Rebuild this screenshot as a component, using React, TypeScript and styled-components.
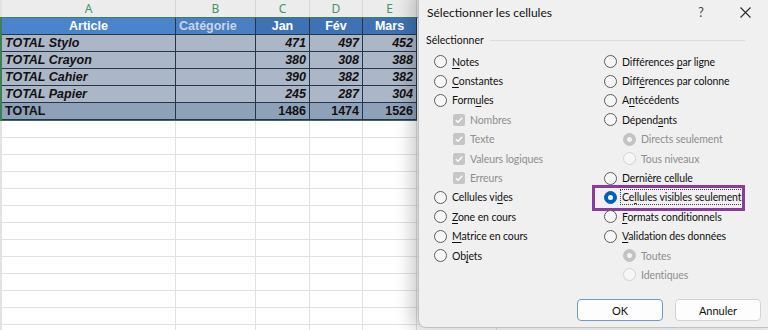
import React from 'react'
import styled, { createGlobalStyle } from 'styled-components'

const GlobalStyle = createGlobalStyle`
  html, body {
    margin: 0;
    padding: 0;
    background: #ffffff;
  }
`

const UI_FONT = `Lato, 'Noto Sans', 'DejaVu Sans', sans-serif`
const HEAD_FONT = `'Noto Sans', 'DejaVu Sans', sans-serif`
const SHEET_FONT = `'Liberation Sans', Arial, sans-serif`

const COLS = [174, 80, 54, 53, 54]
const LETTERS = ['A', 'B', 'C', 'D', 'E']

const DATA = [
  { label: 'TOTAL Stylo', values: [471, 497, 452] },
  { label: 'TOTAL Crayon', values: [380, 308, 388] },
  { label: 'TOTAL Cahier', values: [390, 382, 382] },
  { label: 'TOTAL Papier', values: [245, 287, 304] },
]
const TOTAL = { label: 'TOTAL', values: [1486, 1474, 1526] }

type RadioState = 'off' | 'on' | 'disabledOn' | 'disabledOff'

interface Option {
  label: string
  kind: 'radio' | 'check'
  state?: RadioState
  sub?: boolean
  disabled?: boolean
  focused?: boolean
}

const LEFT: Option[] = [
  { label: '&Notes', kind: 'radio', state: 'off' },
  { label: '&Constantes', kind: 'radio', state: 'off' },
  { label: 'Form&ules', kind: 'radio', state: 'off' },
  { label: 'Nombres', kind: 'check', sub: true, disabled: true },
  { label: 'Texte', kind: 'check', sub: true, disabled: true },
  { label: 'Valeurs logiques', kind: 'check', sub: true, disabled: true },
  { label: 'Erreurs', kind: 'check', sub: true, disabled: true },
  { label: 'Cellules vi&des', kind: 'radio', state: 'off' },
  { label: '&Zone en cours', kind: 'radio', state: 'off' },
  { label: '&Matrice en cours', kind: 'radio', state: 'off' },
  { label: 'Ob&jets', kind: 'radio', state: 'off' },
]

const RIGHT: Option[] = [
  { label: 'Différences &par ligne', kind: 'radio', state: 'off' },
  { label: 'Diff&érences par colonne', kind: 'radio', state: 'off' },
  { label: 'A&ntécédents', kind: 'radio', state: 'off' },
  { label: 'Dépend&ants', kind: 'radio', state: 'off' },
  { label: 'Directs seulement', kind: 'radio', state: 'disabledOn', sub: true, disabled: true },
  { label: 'Tous niveaux', kind: 'radio', state: 'disabledOff', sub: true, disabled: true },
  { label: 'Dernière cellule', kind: 'radio', state: 'off' },
  { label: 'Ce&llules visibles seulement', kind: 'radio', state: 'on', focused: true },
  { label: '&Formats conditionnels', kind: 'radio', state: 'off' },
  { label: '&Validation des données', kind: 'radio', state: 'off' },
  { label: 'Toutes', kind: 'radio', state: 'disabledOn', sub: true, disabled: true },
  { label: 'Identiques', kind: 'radio', state: 'disabledOff', sub: true, disabled: true },
]

// "&" marks the access key, like in a Windows resource
function Label({ text }: { text: string }) {
  const i = text.indexOf('&')
  if (i < 0) return <>{text}</>
  return (
    <>
      {text.slice(0, i)}
      <u>{text[i + 1]}</u>
      {text.slice(i + 2)}
    </>
  )
}

function App() {
  return (
    <Page>
      <GlobalStyle />

      <Sheet>
        <ColHeadRow>
          <Stub />
          {COLS.map((w, i) => (
            <ColHead key={i} $w={w}>{LETTERS[i]}</ColHead>
          ))}
          <ColHead $w={80} $plain />
        </ColHeadRow>

        <Table>
          <TCell $kind="headA" $align="center">Article</TCell>
          <TCell $kind="headB" $align="left" $faded>Catégorie</TCell>
          <TCell $kind="head" $align="center">Jan</TCell>
          <TCell $kind="head" $align="center">Fév</TCell>
          <TCell $kind="head" $align="center">Mars</TCell>

          {DATA.map((row) => (
            <React.Fragment key={row.label}>
              <TCell $kind="data" $align="left">{row.label}</TCell>
              <TCell $kind="data" $align="left" />
              {row.values.map((v, i) => (
                <TCell key={i} $kind="data" $align="right">{v}</TCell>
              ))}
            </React.Fragment>
          ))}

          <TCell $kind="total" $align="left">{TOTAL.label}</TCell>
          <TCell $kind="total" $align="left" />
          {TOTAL.values.map((v, i) => (
            <TCell key={i} $kind="total" $align="right">{v}</TCell>
          ))}
        </Table>

        {Array.from({ length: 13 }).map((_, r) => (
          <GridRow key={r}>
            <Stub />
            {COLS.map((w, i) => (
              <GridCell key={i} $w={w} />
            ))}
            <GridCell $w={80} />
          </GridRow>
        ))}
      </Sheet>

      <Dialog>
        <TitleBar>
          <Title>Sélectionner les cellules</Title>
          <TitleButton>?</TitleButton>
          <TitleButton>
            <svg width="11" height="11" viewBox="0 0 11 11">
              <path d="M0.5 0.5 L10.5 10.5 M10.5 0.5 L0.5 10.5" stroke="#2b2b2b" strokeWidth="1.1" fill="none" />
            </svg>
          </TitleButton>
        </TitleBar>

        <GroupHeader>
          <GroupLabel>Sélectionner</GroupLabel>
          <GroupLine />
        </GroupHeader>

        <Options>
          <OptionColumn $w={170}>
            {LEFT.map((o) => <OptionRow key={o.label} option={o} />)}
          </OptionColumn>
          <OptionColumn>
            {RIGHT.map((o) => <OptionRow key={o.label} option={o} />)}
          </OptionColumn>
        </Options>

        <ButtonRow>
          <Button $primary>OK</Button>
          <Button>Annuler</Button>
        </ButtonRow>
      </Dialog>
    </Page>
  )
}

function OptionRow({ option }: { option: Option }) {
  return (
    <Row $sub={!!option.sub} $highlight={!!option.focused}>
      {option.kind === 'radio' ? (
        <Radio $state={option.state || 'off'} />
      ) : (
        <Check>
          <svg width="10" height="10" viewBox="0 0 10 10">
            <path d="M1.8 5.2 L4 7.3 L8.3 2.8" stroke="#ffffff" strokeWidth="1.3" fill="none" />
          </svg>
        </Check>
      )}
      <OptionText $disabled={!!option.disabled} $focused={!!option.focused}>
        <Label text={option.label} />
      </OptionText>
    </Row>
  )
}

const Page = styled.div`
  position: relative;
  width: 768px;
  height: 330px;
  overflow: hidden;
  background: #ffffff;
`

/* ---------- spreadsheet ---------- */

const Sheet = styled.div`
  display: flex;
  flex-direction: column;
  font-family: ${SHEET_FONT};
`

const ColHeadRow = styled.div`
  display: flex;
  height: 18px;
  box-sizing: border-box;
  background: #f4f4f4;
  border-bottom: 1px solid #3f7f58;
`

const Stub = styled.div`
  width: 2px;
  flex: none;
  background: #e2e2e2;
`

const ColHead = styled.div<{ $w: number; $plain?: boolean }>`
  width: ${(p) => p.$w}px;
  flex: none;
  box-sizing: border-box;
  border-right: 1px solid #d6d6d6;
  text-align: center;
  font-family: ${HEAD_FONT};
  font-size: 12px;
  line-height: 17px;
  color: #4a9268;
  background: ${(p) => (p.$plain ? '#f4f4f4' : '#ececec')};
`

const Table = styled.div`
  display: grid;
  grid-template-columns: ${COLS.map((w) => `${w}px`).join(' ')};
  grid-auto-rows: 17px;
  width: max-content;
  border-left: 2px solid #3f7f58;
  border-bottom: 1px solid #3f6a58;
`

type CellKind = 'headA' | 'headB' | 'head' | 'data' | 'total'

const CELL_BG: Record<CellKind, string> = {
  headA: '#4a85cb',
  headB: '#4a7fc2',
  head: '#3f72b3',
  data: '#abb6c6',
  total: '#8fa1b9',
}

const TCell = styled.div<{ $kind: CellKind; $align: 'left' | 'center' | 'right'; $faded?: boolean }>`
  box-sizing: border-box;
  background: ${(p) => CELL_BG[p.$kind]};
  border-right: 1px solid #24364c;
  border-bottom: 1px solid #24364c;
  padding: 0 3px;
  text-align: ${(p) => p.$align};
  font-size: 12.5px;
  line-height: 16px;
  font-weight: bold;
  font-style: ${(p) => (p.$kind === 'data' ? 'italic' : 'normal')};
  color: ${(p) =>
    p.$faded ? '#c9d5e6' : p.$kind.startsWith('head') ? '#ffffff' : '#111111'};
  white-space: nowrap;
  overflow: hidden;
`

const GridRow = styled.div`
  display: flex;
  height: 17px;
  box-sizing: border-box;
  border-bottom: 1px solid #e1e1e1;
`

const GridCell = styled.div<{ $w: number }>`
  width: ${(p) => p.$w}px;
  flex: none;
  box-sizing: border-box;
  border-right: 1px solid #e1e1e1;
`

/* ---------- dialog ---------- */

const Dialog = styled.div`
  position: absolute;
  left: 418px;
  top: -12px;
  width: 362px;
  height: 340px;
  box-sizing: border-box;
  display: flex;
  flex-direction: column;
  background: #f0f0f0;
  border: 1px solid #c2c2c2;
  border-radius: 8px;
  box-shadow: -6px 2px 18px rgba(0, 0, 0, 0.22);
  font-family: ${UI_FONT};
  color: #111;
`

const TitleBar = styled.div`
  display: flex;
  align-items: center;
  height: 28px;
  margin-top: 9px;
  padding: 0 12px 0 8px;
`

const Title = styled.div`
  flex: 1;
  font-size: 12px;
  color: #111;
`

const TitleButton = styled.div`
  width: 44px;
  display: flex;
  align-items: center;
  justify-content: center;
  font-size: 12.5px;
  color: #444;
`

const GroupHeader = styled.div`
  display: flex;
  align-items: center;
  gap: 6px;
  height: 14px;
  margin-top: 7px;
  padding: 0 34px 0 7px;
`

const GroupLabel = styled.div`
  font-size: 10.5px;
`

const GroupLine = styled.div`
  flex: 1;
  height: 1px;
  background: #dcdcdc;
`

const Options = styled.div`
  display: flex;
  margin-top: 5px;
  padding-left: 15px;
`

const OptionColumn = styled.div<{ $w?: number }>`
  display: flex;
  flex-direction: column;
  width: ${(p) => (p.$w ? `${p.$w}px` : 'auto')};
`

const Row = styled.div<{ $sub: boolean; $highlight: boolean }>`
  position: relative;
  display: flex;
  align-items: center;
  gap: 5px;
  height: 19.4px;
  padding-left: ${(p) => (p.$sub ? '19px' : '0')};

  ${(p) =>
    p.$highlight &&
    `
    &::after {
      content: '';
      position: absolute;
      left: -12px;
      top: -3px;
      bottom: -4px;
      width: 153px;
      box-sizing: border-box;
      border: 3px solid #8b3b9e;
    }
  `}
`

const RADIO_STYLE: Record<RadioState, { border: string; bg: string; dot: string }> = {
  off: { border: '#5c5c5c', bg: '#f7f7f7', dot: 'transparent' },
  on: { border: '#005fb8', bg: '#005fb8', dot: '#ffffff' },
  disabledOn: { border: '#c3c3c3', bg: '#c3c3c3', dot: '#f3f3f3' },
  disabledOff: { border: '#d2d2d2', bg: '#f6f6f6', dot: 'transparent' },
}

const Radio = styled.span<{ $state: RadioState }>`
  box-sizing: border-box;
  flex: none;
  width: 13px;
  height: 13px;
  border-radius: 50%;
  border: 1px solid ${(p) => RADIO_STYLE[p.$state].border};
  background: ${(p) => RADIO_STYLE[p.$state].bg};
  display: flex;
  align-items: center;
  justify-content: center;

  &::after {
    content: '';
    width: 5px;
    height: 5px;
    border-radius: 50%;
    background: ${(p) => RADIO_STYLE[p.$state].dot};
  }
`

const Check = styled.span`
  flex: none;
  width: 12px;
  height: 12px;
  border-radius: 2px;
  background: #c6c6c6;
  display: flex;
  align-items: center;
  justify-content: center;
`

const OptionText = styled.span<{ $disabled: boolean; $focused: boolean }>`
  font-size: 10.5px;
  letter-spacing: -0.1px;
  white-space: nowrap;
  color: ${(p) => (p.$disabled ? '#8e8e8e' : '#111')};
  outline: ${(p) => (p.$focused ? '1px dotted #444' : 'none')};
  outline-offset: 1px;

  u {
    text-underline-offset: 1.5px;
  }
`

const ButtonRow = styled.div`
  display: flex;
  justify-content: flex-end;
  gap: 12px;
  margin-top: auto;
  padding: 0 18px 6px 0;
`

const Button = styled.div<{ $primary?: boolean }>`
  width: 86px;
  height: 22px;
  box-sizing: border-box;
  display: flex;
  align-items: center;
  justify-content: center;
  font-size: 11px;
  background: #fdfdfd;
  border: 1px solid ${(p) => (p.$primary ? '#6f9bc4' : '#d3d3d3')};
  border-radius: 4px;
  color: #111;
`

export default App
